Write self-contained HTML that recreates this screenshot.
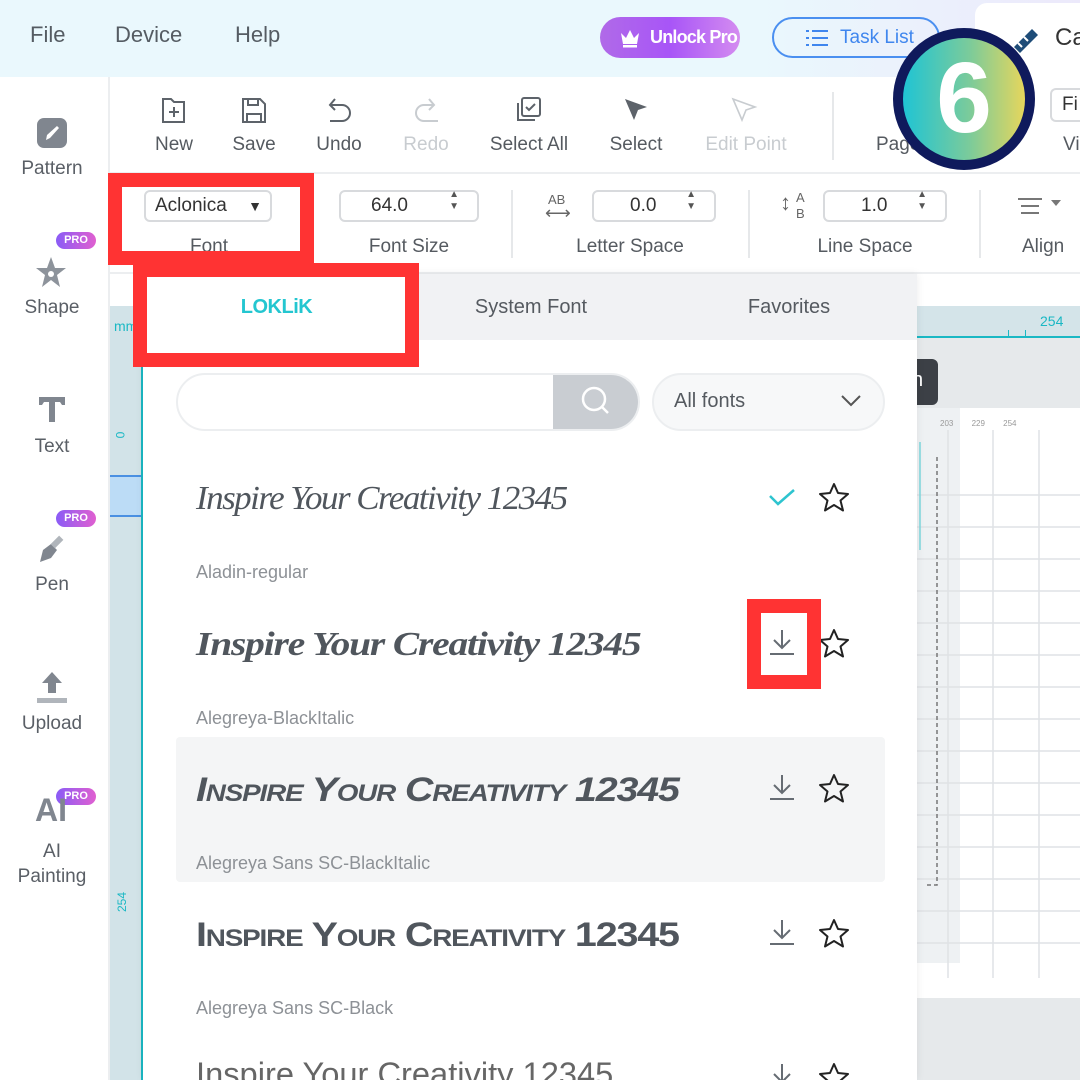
<!DOCTYPE html>
<html><head><meta charset="utf-8"><style>
*{margin:0;padding:0;box-sizing:border-box}
html,body{width:1080px;height:1080px;overflow:hidden}
body{position:relative;background:#fff;font-family:"Liberation Sans",sans-serif;color:#555a60}
.a{position:absolute}
.top{left:0;top:0;width:1080px;height:77px;background:linear-gradient(90deg,#eaf8fd 0%,#eaf8fd 70%,#ece9fb 100%)}
.menu{top:22px;font-size:22px;color:#555c63}
.lbl{font-size:19px;color:#555a60;text-align:center;white-space:nowrap}
.side{font-size:19px;color:#5a5f66;text-align:center;width:104px;left:0}
.pro{width:40px;height:17px;border-radius:9px;background:linear-gradient(90deg,#8a5cf6,#e05fd0);color:#fff;font-size:11px;font-weight:bold;text-align:center;line-height:17px}
.inp{height:32px;border:2px solid #d8dadd;border-radius:6px;background:#fff;font-size:19px;color:#333;line-height:28px}
.red{border:14px solid #ff3333}
.row{left:176px;width:709px;height:145px}
.samp{left:20px;top:34px;font-size:33px;color:#50565d;white-space:nowrap;transform-origin:left}
.nm{left:20px;top:116px;font-size:18px;color:#8d9196}
</style></head><body>
<div class="a top"></div>
<div class="a menu" style="left:30px">File</div>
<div class="a menu" style="left:115px">Device</div>
<div class="a menu" style="left:235px">Help</div>
<div class="a" style="left:600px;top:17px;width:140px;height:41px;border-radius:21px;background:linear-gradient(90deg,#b06ae8,#a855f7 50%,#d48cf0);color:#fff;font-size:18px;font-weight:bold;line-height:41px;padding-left:50px;letter-spacing:-0.8px;white-space:nowrap">Unlock Pro</div>
<svg class="a" style="left:618px;top:27px" width="24" height="22" viewBox="0 0 24 22"><path d="M3 6l5 5 4-8 4 8 5-5-2 11H5z" fill="#fff"/><rect x="5" y="18" width="14" height="2.5" fill="#fff"/></svg>
<div class="a" style="left:772px;top:17px;width:168px;height:41px;border-radius:21px;border:2px solid #4a8ff0;color:#3f86ee;font-size:19px;line-height:37px;padding-left:66px;white-space:nowrap">Task List</div>
<svg class="a" style="left:806px;top:29px" width="22" height="18"><g fill="#3f86ee"><rect x="0" y="1" width="3" height="2"/><rect x="6" y="1" width="16" height="2"/><rect x="0" y="8" width="3" height="2"/><rect x="6" y="8" width="16" height="2"/><rect x="0" y="15" width="3" height="2"/><rect x="6" y="15" width="16" height="2"/></g></svg>
<div class="a" style="left:975px;top:3px;width:120px;height:74px;background:#fff;border-radius:12px 0 0 0"></div>
<div class="a" style="left:1055px;top:24px;font-size:24px;color:#333">Ca</div>
<svg class="a" style="left:1010px;top:25px" width="32" height="30"><path d="M4 22L22 4l6 6-18 18z" fill="#1e4c78"/><path d="M8 18l4 4M14 12l4 4" stroke="#fff" stroke-width="2"/></svg>
<!-- sidebar -->
<div class="a" style="left:108px;top:77px;width:2px;height:1003px;background:#eceef0"></div>
<svg class="a" style="left:37px;top:118px" width="30" height="30"><rect width="30" height="30" rx="7" fill="#80868f"/><path d="M9 22l4-2 9-10-2-2-10 9z" fill="#fff"/></svg>
<div class="a side" style="top:158px">Pattern</div>
<div class="a pro" style="left:56px;top:232px">PRO</div>
<svg class="a" style="left:34px;top:255px" width="34" height="34"><path d="M17 2l4 11h11l-9 7 3 12-9-7-9 7 3-12-9-7h11z" fill="#8d939b"/><circle cx="17" cy="19" r="3" fill="#fff"/></svg>
<div class="a side" style="top:297px">Shape</div>
<svg class="a" style="left:38px;top:395px" width="28" height="30"><path d="M1 2h26v8h-3l-2-3h-5v20h-6V7H6l-2 3H1z" fill="#80868f"/></svg>
<div class="a side" style="top:436px">Text</div>
<div class="a pro" style="left:56px;top:510px">PRO</div>
<svg class="a" style="left:36px;top:532px" width="32" height="34"><path d="M4 30l3-12 8-6 6 6-6 8z" fill="#80868f"/><rect x="18" y="4" width="6" height="12" transform="rotate(45 21 10)" fill="#b0b5bb"/></svg>
<div class="a side" style="top:574px">Pen</div>
<svg class="a" style="left:37px;top:670px" width="30" height="36"><path d="M15 2l10 11h-6v10h-8V13H5z" fill="#80868f"/><rect x="0" y="28" width="30" height="5" fill="#b0b5bb"/></svg>
<div class="a side" style="top:713px">Upload</div>
<div class="a pro" style="left:56px;top:788px">PRO</div>
<div class="a" style="left:35px;top:792px;font-size:32px;font-weight:bold;color:#80868f">AI</div>
<div class="a side" style="top:839px;line-height:25px">AI<br>Painting</div>
<!-- toolbar row1 -->
<svg class="a" style="left:160px;top:96px" width="30" height="30"><g fill="none" stroke="#5d636a" stroke-width="2"><path d="M3 3h8l3 3h10v20H3z"/><path d="M14 11v10M9 16h10"/></g></svg>
<svg class="a" style="left:240px;top:96px" width="28" height="30"><g fill="none" stroke="#5d636a" stroke-width="2"><path d="M3 3h17l5 5v18H3z"/><path d="M8 3v6h10V3M7 26v-8h14v8"/></g></svg>
<svg class="a" style="left:326px;top:96px" width="30" height="30"><g fill="none" stroke="#5d636a" stroke-width="2"><path d="M9 3L4 9l5 5"/><path d="M4 9h12a8 8 0 0 1 0 16H4"/></g></svg>
<svg class="a" style="left:412px;top:96px" width="30" height="30"><g fill="none" stroke="#c8ccd0" stroke-width="2"><path d="M17 3l5 6-5 5"/><path d="M22 9H12a8 8 0 0 0 0 16h14"/></g></svg>
<svg class="a" style="left:514px;top:96px" width="30" height="30"><g fill="none" stroke="#5d636a" stroke-width="2"><rect x="8" y="2" width="18" height="18" rx="2"/><path d="M4 7v17h17"/><path d="M12 11l3 3 6-6"/></g></svg>
<svg class="a" style="left:622px;top:96px" width="30" height="30"><path d="M3 3l22 8-9 3-4 10z" fill="#5d636a"/></svg>
<svg class="a" style="left:730px;top:96px" width="30" height="30"><path d="M3 3l22 8-9 3-4 10z" fill="none" stroke="#c8ccd0" stroke-width="1.6"/></svg>
<div class="a lbl" style="left:144px;top:134px;width:60px">New</div>
<div class="a lbl" style="left:224px;top:134px;width:60px">Save</div>
<div class="a lbl" style="left:309px;top:134px;width:60px">Undo</div>
<div class="a lbl" style="left:396px;top:134px;width:60px;color:#c8ccd0">Redo</div>
<div class="a lbl" style="left:479px;top:134px;width:100px">Select All</div>
<div class="a lbl" style="left:596px;top:134px;width:80px">Select</div>
<div class="a lbl" style="left:696px;top:134px;width:100px;color:#c8ccd0">Edit Point</div>
<div class="a" style="left:832px;top:92px;width:2px;height:68px;background:#e6e8ea"></div>
<div class="a lbl" style="left:876px;top:134px">Page</div>
<div class="a" style="left:1050px;top:88px;width:40px;height:34px;border:2px solid #d8dadd;border-radius:6px 0 0 6px;border-right:none;font-size:19px;padding:4px 0 0 10px;color:#333">Fi</div>
<div class="a lbl" style="left:1063px;top:134px">Vi</div>
<div class="a" style="left:110px;top:172px;width:970px;height:2px;background:#eceef0"></div>
<!-- toolbar row2 -->
<div class="a inp" style="left:144px;top:190px;width:128px;padding-left:9px">Aclonica<span style="position:absolute;right:8px;top:0;font-size:14px">▼</span></div>
<div class="a lbl" style="left:159px;top:236px;width:100px">Font</div>
<div class="a inp" style="left:339px;top:190px;width:140px;padding-left:30px">64.0<span style="position:absolute;right:18px;top:-3px;font-size:10px;line-height:12px;color:#555">▲<br>▼</span></div>
<div class="a lbl" style="left:339px;top:236px;width:140px">Font Size</div>
<div class="a" style="left:511px;top:190px;width:2px;height:68px;background:#e6e8ea"></div>
<div class="a" style="left:548px;top:192px;font-size:13px;color:#666">AB</div>
<div class="a" style="left:545px;top:203px;font-size:18px;color:#666">⟷</div>
<div class="a inp" style="left:592px;top:190px;width:124px;padding-left:36px">0.0<span style="position:absolute;right:18px;top:-3px;font-size:10px;line-height:12px;color:#555">▲<br>▼</span></div>
<div class="a lbl" style="left:560px;top:236px;width:140px">Letter Space</div>
<div class="a" style="left:748px;top:190px;width:2px;height:68px;background:#e6e8ea"></div>
<div class="a" style="left:780px;top:190px;font-size:22px;color:#666">↕</div>
<div class="a" style="left:796px;top:190px;font-size:13px;line-height:16px;color:#666">A<br>B</div>
<div class="a inp" style="left:823px;top:190px;width:124px;padding-left:36px">1.0<span style="position:absolute;right:18px;top:-3px;font-size:10px;line-height:12px;color:#555">▲<br>▼</span></div>
<div class="a lbl" style="left:795px;top:236px;width:140px">Line Space</div>
<div class="a" style="left:979px;top:190px;width:2px;height:68px;background:#e6e8ea"></div>
<svg class="a" style="left:1018px;top:196px" width="48" height="22"><g fill="#777"><rect x="0" y="2" width="24" height="2"/><rect x="3" y="9" width="18" height="2"/><rect x="3" y="16" width="18" height="2"/><path d="M33 4h10l-5 6z"/></g></svg>
<div class="a lbl" style="left:1022px;top:236px">Align</div>
<div class="a" style="left:110px;top:272px;width:970px;height:2px;background:#eceef0"></div>
<!-- canvas right -->
<div class="a" style="left:917px;top:274px;width:163px;height:806px;background:#e6e9eb"></div>
<div class="a" style="left:917px;top:274px;width:163px;height:32px;background:#fff"></div>
<div class="a" style="left:917px;top:306px;width:163px;height:32px;background:#d4e4e9;border-bottom:2px solid #1ab8c4"></div>
<div class="a" style="left:1040px;top:313px;font-size:14px;color:#1ab8c4">254</div>
<div class="a" style="left:1008px;top:330px;width:1px;height:7px;background:#1ab8c4"></div>
<div class="a" style="left:1025px;top:330px;width:1px;height:7px;background:#1ab8c4"></div>
<div class="a" style="left:900px;top:359px;width:38px;height:46px;background:#3c4046;border-radius:6px;color:#fff;font-size:20px;padding:10px 0 0 12px">n</div>
<div class="a" style="left:917px;top:408px;width:163px;height:570px;background:#fff"></div>
<div class="a" style="left:917px;top:408px;width:43px;height:555px;background:#eef1f3"></div>
<div class="a" style="left:940px;top:419px;font-size:8px;color:#999;word-spacing:16px">203 229 254</div>
<svg class="a" style="left:917px;top:430px" width="163" height="548"><g stroke="#dfe2e5" stroke-width="1.5"><path d="M31 0v548M76 0v548M122 0v548"/><path d="M0 65h163M0 97h163M0 129h163M0 161h163M0 193h163M0 225h163M0 257h163M0 289h163M0 321h163M0 353h163M0 385h163M0 417h163M0 449h163M0 481h163M0 513h163"/></g><path d="M20 27v428h-10" stroke="#777" stroke-width="1.5" stroke-dasharray="4 3" fill="none"/><path d="M3 12v108" stroke="#7fd8de" stroke-width="1.5"/></svg>
<div class="a" style="left:917px;top:978px;width:163px;height:20px;background:#fff"></div>
<!-- left ruler -->
<div class="a" style="left:110px;top:306px;width:33px;height:774px;background:#d2e3e8;border-right:2px solid #1ab8c4"></div>
<div class="a" style="left:110px;top:475px;width:31px;height:42px;background:#bcdcf6;border-top:2px solid #4a90e2;border-bottom:2px solid #4a90e2"></div>
<div class="a" style="left:114px;top:318px;font-size:14px;color:#1ab8c4">mm</div>
<div class="a" style="left:117px;top:428px;font-size:12px;color:#1ab8c4;transform:rotate(-90deg)">0</div>
<div class="a" style="left:112px;top:895px;font-size:12px;color:#1ab8c4;transform:rotate(-90deg)">254</div>
<!-- dropdown -->
<div class="a" style="left:143px;top:274px;width:774px;height:806px;background:#fff;box-shadow:0 0 8px rgba(0,0,0,.08)"></div>
<div class="a" style="left:143px;top:274px;width:774px;height:66px;background:#f1f2f4"></div>
<div class="a" style="left:143px;top:274px;width:267px;height:66px;background:#fff"></div>
<div class="a" style="left:143px;top:296px;width:267px;text-align:center;font-size:20px;font-weight:bold;color:#24c6d0;letter-spacing:-0.5px">LOKLiK</div>
<div class="a" style="left:410px;top:296px;width:242px;text-align:center;font-size:20px;color:#555a60">System Font</div>
<div class="a" style="left:660px;top:296px;width:258px;text-align:center;font-size:20px;color:#555a60">Favorites</div>
<div class="a" style="left:176px;top:373px;width:464px;height:58px;border:2px solid #eceef0;border-radius:29px;overflow:hidden"><div class="a" style="left:375px;top:0;width:90px;height:58px;background:#c9cdd2"></div></div>
<svg class="a" style="left:580px;top:385px" width="32" height="32"><circle cx="14" cy="14" r="11" fill="none" stroke="#fff" stroke-width="2.5"/><path d="M22 22l6 6" stroke="#fff" stroke-width="2.5"/></svg>
<div class="a" style="left:652px;top:373px;width:233px;height:58px;border:2px solid #eceef0;border-radius:29px;background:#f7f8f9;font-size:20px;color:#555a60;padding:15px 0 0 20px">All fonts</div>
<svg class="a" style="left:840px;top:394px" width="22" height="14"><path d="M2 2l9 9 9-9" fill="none" stroke="#555" stroke-width="2"/></svg>
<!-- rows -->
<div class="a row" style="top:446px"><div class="a samp" style="font-family:'Liberation Serif',serif;font-style:italic;letter-spacing:-1.5px;font-size:34px;transform:scaleX(1.03)">Inspire Your Creativity 12345</div><div class="a nm">Aladin-regular</div></div>
<div class="a row" style="top:592px"><div class="a samp" style="font-family:'Liberation Serif',serif;font-style:italic;font-weight:bold;font-size:34px;letter-spacing:-1px;transform:scaleX(1.16)">Inspire Your Creativity 12345</div><div class="a nm">Alegreya-BlackItalic</div></div>
<div class="a row" style="top:737px;background:#f4f5f6;border-radius:4px"><div class="a samp" style="font-weight:bold;font-style:italic;font-variant:small-caps;font-size:34px;letter-spacing:-1px;transform:scaleX(1.16)">Inspire Your Creativity 12345</div><div class="a nm">Alegreya Sans SC-BlackItalic</div></div>
<div class="a row" style="top:882px"><div class="a samp" style="font-weight:bold;font-variant:small-caps;font-size:34px;letter-spacing:-1px;transform:scaleX(1.16)">Inspire Your Creativity 12345</div><div class="a nm">Alegreya Sans SC-Black</div></div>
<div class="a row" style="top:1028px;height:52px;overflow:hidden"><div class="a samp" style="top:28px;font-size:32px;color:#666;transform:scaleX(1.02)">Inspire Your Creativity 12345</div></div>
<svg class="a" style="left:766px;top:483px" width="34" height="30"><path d="M4 13l8 8 16-14" fill="none" stroke="#2ec4cf" stroke-width="2.5"/></svg>
<svg width="0" height="0" style="position:absolute"><defs><path id="st" d="M16 2l4 9 10 1-7.5 6.5 2.5 10-9-5.5-9 5.5 2.5-10L2 12l10-1z" fill="none" stroke="#222" stroke-width="2" stroke-linejoin="round"/><g id="dl" fill="none" stroke="#666c73" stroke-width="2"><path d="M14 2v18M6 12l8 8 8-8"/><path d="M2 26h24"/></g></defs></svg>
<svg class="a" style="left:818px;top:482px" width="32" height="32"><use href="#st"/></svg>
<svg class="a" style="left:818px;top:628px" width="32" height="32"><use href="#st"/></svg>
<svg class="a" style="left:818px;top:773px" width="32" height="32"><use href="#st"/></svg>
<svg class="a" style="left:818px;top:918px" width="32" height="32"><use href="#st"/></svg>
<svg class="a" style="left:818px;top:1062px" width="32" height="18"><use href="#st"/></svg>
<svg class="a" style="left:768px;top:628px" width="28" height="30"><use href="#dl"/></svg>
<svg class="a" style="left:768px;top:773px" width="28" height="30"><use href="#dl"/></svg>
<svg class="a" style="left:768px;top:918px" width="28" height="30"><use href="#dl"/></svg>
<svg class="a" style="left:768px;top:1062px" width="28" height="18"><use href="#dl"/></svg>
<!-- red boxes -->
<div class="a red" style="left:108px;top:173px;width:206px;height:92px"></div>
<div class="a red" style="left:133px;top:263px;width:286px;height:104px"></div>
<div class="a red" style="left:747px;top:599px;width:74px;height:90px"></div>
<!-- badge -->
<div class="a" style="left:893px;top:28px;width:142px;height:142px;border-radius:50%;border:10px solid #0f1a5c;background:linear-gradient(90deg,#1fc4d4,#7ccb9a 55%,#e6d65c);color:#fff;font-size:100px;font-weight:bold;text-align:center;line-height:120px">6</div>
</body></html>
